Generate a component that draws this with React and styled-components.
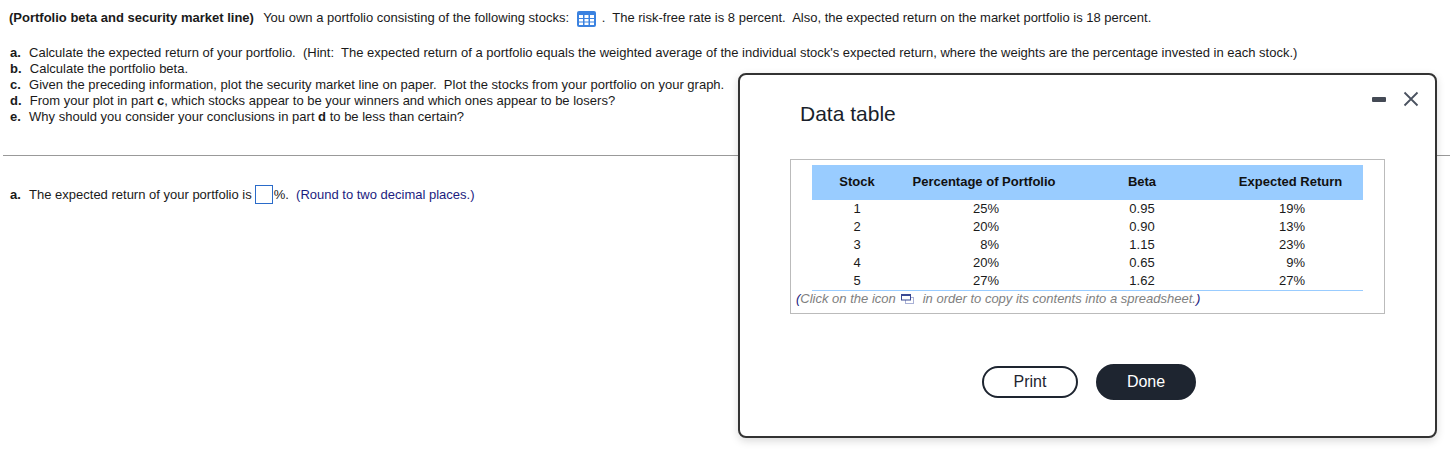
import styled, { createGlobalStyle } from 'styled-components';

const GlobalStyle = createGlobalStyle`
  html, body {
    margin: 0;
    padding: 0;
    background: #fff;
  }
  body {
    font-family: "Liberation Sans", Arial, sans-serif;
    font-size: 13px;
    color: #1a1a1a;
  }
`;

const Page = styled.div`
  position: relative;
  width: 1450px;
  height: 449px;
  overflow: hidden;
`;

const Question = styled.div`
  padding: 10px 0 0 9px;
  height: 155px;
  box-sizing: border-box;
  line-height: 16px;
  white-space: pre-wrap;
`;

const Intro = styled.div`
  display: flex;
  align-items: center;
  height: 16px;
  margin-bottom: 19px;
`;

const IntroTitle = styled.b`
  margin-right: 2px;
`;

const GridIcon = styled.svg`
  width: 19px;
  height: 16px;
  margin: 2px 6px 0 4px;
  flex: none;
`;

const Part = styled.div`
  height: 16px;
`;

const Letter = styled.b`
  margin: 0 1px;
`;

const Divider = styled.hr`
  margin: 0 0 0 3px;
  border: 0;
  border-top: 1px solid #999;
`;

const Answer = styled.div`
  display: flex;
  align-items: center;
  padding: 29px 0 0 9px;
  white-space: pre-wrap;
  line-height: 18px;
`;

const AnswerBox = styled.span`
  display: inline-block;
  width: 16px;
  height: 17px;
  margin: 0 1px 0 3px;
  border: 1px solid #2a6bc9;
`;

const Hint = styled.span`
  color: #1c1c80;
`;

const Dialog = styled.div`
  position: absolute;
  left: 738px;
  top: 73px;
  width: 699px;
  height: 365px;
  box-sizing: border-box;
  padding: 0 50px;
  background: #fff;
  border: 2px solid #333;
  border-radius: 8px;
  box-shadow: 0 3px 8px rgba(0, 0, 0, 0.15);
`;

const WindowControls = styled.div`
  position: absolute;
  top: 16px;
  right: 16px;
  display: flex;
  align-items: center;
  gap: 17px;
`;

const Minimize = styled.span`
  width: 14px;
  height: 5px;
  border-radius: 1px;
  margin-top: 1px;
  background: #444a55;
`;

const CloseIcon = styled.svg`
  width: 16px;
  height: 16px;
`;

const Title = styled.h2`
  margin: 0 0 0 10px;
  padding-top: 27px;
  height: 84px;
  box-sizing: border-box;
  font-size: 21px;
  font-weight: 400;
  line-height: 24px;
  color: #1a1f2b;
`;

const TableFrame = styled.div`
  width: 595px;
  height: 155px;
  box-sizing: border-box;
  padding: 5px 21px 0 21px;
  border: 1px solid #bbb;
`;

const Row = styled.div`
  display: grid;
  grid-template-columns: 90px 164px 152px 145px;
  height: 18px;
  line-height: 18px;
  color: #1a1a1a;
`;

const HeaderRow = styled(Row)`
  height: 35px;
  line-height: 33px;
  background: #99ccff;
  font-weight: 700;
  color: #111;
`;

const Cell = styled.div`
  text-align: ${props => (props.$pad ? 'right' : 'center')};
  padding-right: ${props => props.$pad || 0}px;
`;

const Rows = styled.div`
  border-bottom: 1px solid #99ccff;
`;

const Note = styled.div`
  display: flex;
  align-items: center;
  margin: 0 0 0 -16px;
  height: 15px;
  font-style: italic;
  color: #808080;
  white-space: pre;
`;

const Paren = styled.span`
  color: #1c1c80;
`;

const CopyIcon = styled.svg`
  width: 13px;
  height: 10px;
  margin: 1px 9px 0 5px;
`;

const Buttons = styled.div`
  display: flex;
  align-items: center;
  gap: 18px;
  margin: 50px 0 0 192px;
`;

const Button = styled.button`
  box-sizing: border-box;
  width: ${props => (props.$primary ? 100 : 96)}px;
  height: ${props => (props.$primary ? 36 : 32)}px;
  padding: 0;
  border-radius: 18px;
  border: 2px solid #1e2530;
  background: ${props => (props.$primary ? '#1e2530' : '#fff')};
  color: ${props => (props.$primary ? '#fff' : '#1e2530')};
  font-family: inherit;
  font-size: 16px;
`;

const rows = [
  ['1', '25%', '0.95', '19%'],
  ['2', '20%', '0.90', '13%'],
  ['3', '8%', '1.15', '23%'],
  ['4', '20%', '0.65', '9%'],
  ['5', '27%', '1.62', '27%'],
];

function App() {
  return (
    <Page>
      <GlobalStyle />
      <Question>
        <Intro>
          <IntroTitle>(Portfolio beta and security market line)</IntroTitle>
          {'  You own a portfolio consisting of the following stocks: '}
          <GridIcon viewBox="0 0 19 16">
            <rect x="0" y="0" width="19" height="16" rx="2" fill="#3b82e0" />
            <g fill="#fff">
              <rect x="2" y="4" width="4" height="3" />
              <rect x="7.5" y="4" width="4" height="3" />
              <rect x="13" y="4" width="4" height="3" />
              <rect x="2" y="8" width="4" height="2.5" />
              <rect x="7.5" y="8" width="4" height="2.5" />
              <rect x="13" y="8" width="4" height="2.5" />
              <rect x="2" y="11.5" width="4" height="2.5" />
              <rect x="7.5" y="11.5" width="4" height="2.5" />
              <rect x="13" y="11.5" width="4" height="2.5" />
            </g>
          </GridIcon>
          {'.  The risk-free rate is 8 percent.  Also, the expected return on the market portfolio is 18 percent.'}
        </Intro>
        <Part><Letter>a.</Letter>{"  Calculate the expected return of your portfolio.  (Hint:  The expected return of a portfolio equals the weighted average of the individual stock's expected return, where the weights are the percentage invested in each stock.)"}</Part>
        <Part><Letter>b.</Letter>{'  Calculate the portfolio beta.'}</Part>
        <Part><Letter>c.</Letter>{'  Given the preceding information, plot the security market line on paper.  Plot the stocks from your portfolio on your graph.'}</Part>
        <Part><Letter>d.</Letter>{'  From your plot in part '}<b>c</b>{', which stocks appear to be your winners and which ones appear to be losers?'}</Part>
        <Part><Letter>e.</Letter>{'  Why should you consider your conclusions in part '}<b>d</b>{' to be less than certain?'}</Part>
      </Question>
      <Divider />
      <Answer>
        <Letter>a.</Letter>{'  The expected return of your portfolio is'}
        <AnswerBox />
        {'%.  '}
        <Hint>(Round to two decimal places.)</Hint>
      </Answer>

      <Dialog>
        <WindowControls>
          <Minimize />
          <CloseIcon viewBox="0 0 16 16">
            <path d="M1.5 1.5 L14.5 14.5 M14.5 1.5 L1.5 14.5" stroke="#4a5260" strokeWidth="1.8" fill="none" />
          </CloseIcon>
        </WindowControls>
        <Title>Data table</Title>
        <TableFrame>
          <HeaderRow>
            <Cell>Stock</Cell>
            <Cell>Percentage of Portfolio</Cell>
            <Cell>Beta</Cell>
            <Cell>Expected Return</Cell>
          </HeaderRow>
          <Rows>
            {rows.map(r => (
              <Row key={r[0]}>
                <Cell>{r[0]}</Cell>
                <Cell $pad={67}>{r[1]}</Cell>
                <Cell>{r[2]}</Cell>
                <Cell $pad={58}>{r[3]}</Cell>
              </Row>
            ))}
          </Rows>
          <Note>
            <Paren>(</Paren>Click on the icon
            <CopyIcon viewBox="0 0 13 10">
              <rect x="4.5" y="3.5" width="8" height="6" fill="#fff" stroke="#a9b1d6" />
              <rect x="0.5" y="0.5" width="9" height="5.5" fill="#fff" stroke="#3b4a94" />
              <rect x="0" y="0" width="10" height="2" fill="#3b4a94" />
            </CopyIcon>
            in order to copy its contents into a spreadsheet.<Paren>)</Paren>
          </Note>
        </TableFrame>
        <Buttons>
          <Button>Print</Button>
          <Button $primary>Done</Button>
        </Buttons>
      </Dialog>
    </Page>
  );
}

export default App;
